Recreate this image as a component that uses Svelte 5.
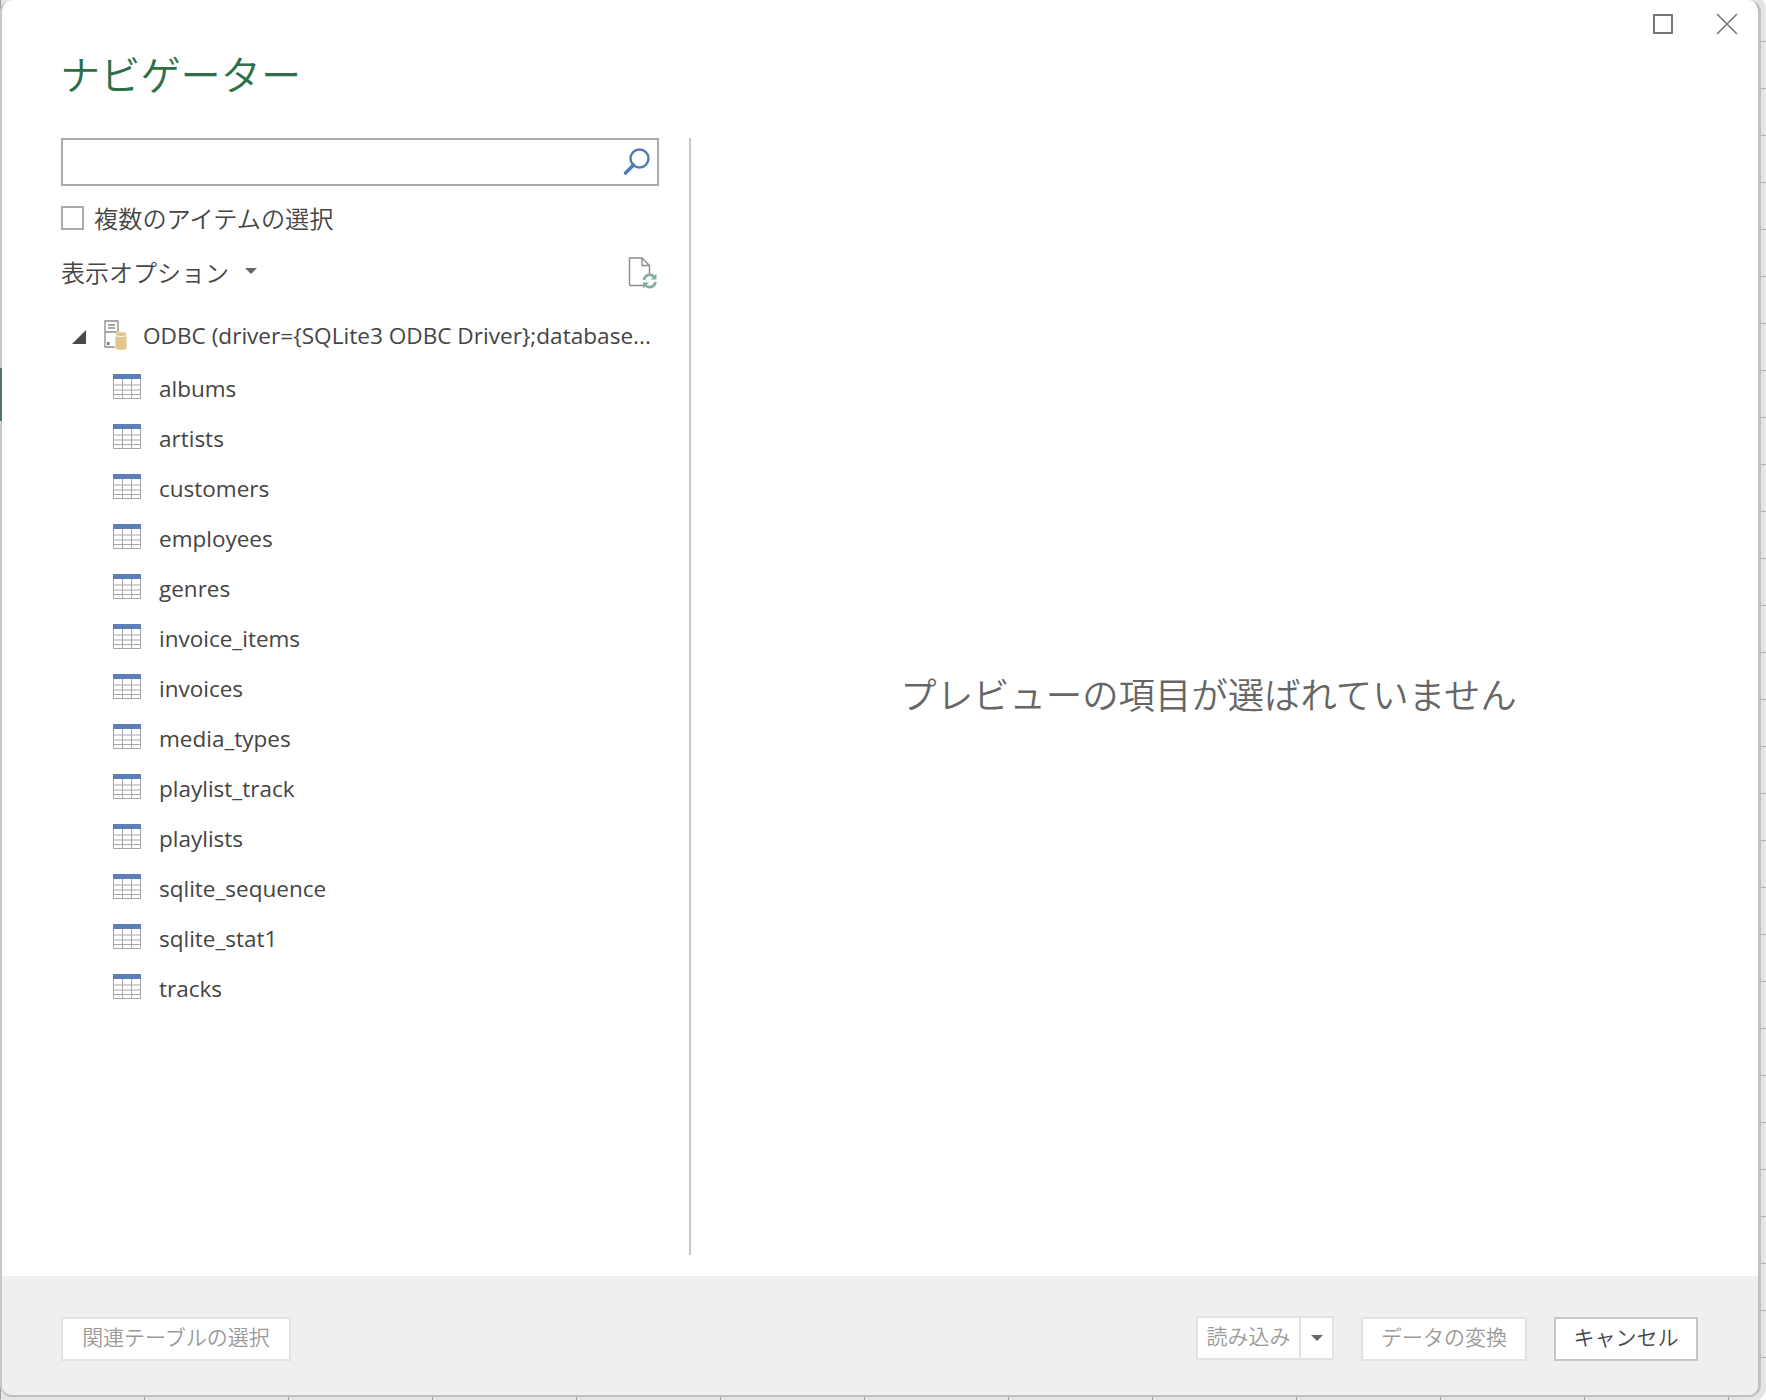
<script>
  const tables = [
    'albums', 'artists', 'customers', 'employees', 'genres', 'invoice_items', 'invoices',
    'media_types', 'playlist_track', 'playlists', 'sqlite_sequence', 'sqlite_stat1', 'tracks'
  ];
</script>

<div class="page">
  <div class="dialog">
    <div class="window-buttons">
      <svg width="20" height="20" viewBox="0 0 20 20"><rect x="1" y="1" width="18" height="18" fill="none" stroke="#777" stroke-width="2" /></svg>
      <svg width="22" height="22" viewBox="0 0 22 22"><path d="M1 1 L21 21 M21 1 L1 21" fill="none" stroke="#777" stroke-width="1.6" /></svg>
    </div>

    <header class="head">
      <h1>ナビゲーター</h1>
    </header>

    <div class="content">
      <div class="left">
        <div class="search">
          <svg class="search-icon" width="30" height="30" viewBox="0 0 30 30">
            <circle cx="17.5" cy="11.5" r="9" fill="none" stroke="#4f7cb8" stroke-width="2.4" />
            <path d="M11.5 18 L3.5 26" fill="none" stroke="#4f7cb8" stroke-width="3.6" stroke-linecap="round" />
          </svg>
        </div>

        <label class="check-row">
          <span class="checkbox"></span>
          <span class="check-label">複数のアイテムの選択</span>
        </label>

        <div class="options-row">
          <span class="options">表示オプション</span>
          <span class="caret"></span>
          <svg class="refresh" width="30" height="32" viewBox="0 0 30 32">
            <path d="M1.5 28.5 V1 H14 L21.5 8.5 V18 M14 1 V8.5 H21.5 M1.500 28.500 H15" fill="none" stroke="#8a8a8a" stroke-width="1.4" />
            <path d="M16 23 A6 6 0 0 1 26.500 20 M27.500 25 A6 6 0 0 1 17 28" fill="none" stroke="#7fae9b" stroke-width="2.6" />
            <path d="M28.500 16.500 V22.500 H22.500 Z M15 31.500 V25.500 H21 Z" fill="#7fae9b" />
          </svg>
        </div>

        <div class="tree-head">
          <svg class="expander" width="14" height="14" viewBox="0 0 14 14"><path d="M14 0 V14 H0 Z" fill="#4a4a4a" /></svg>
          <svg class="server" width="24" height="31" viewBox="0 0 24 31">
            <path d="M1 1 H14 V27 H1 Z M1 12 H14 M4 5 H11 M4 8 H11" fill="none" stroke="#8a8a8a" stroke-width="1.3" />
            <rect x="3" y="22" width="2.500" height="3" fill="#777" />
            <path d="M11 14 C11 11 23 11 23 14 V28 C23 31 11 31 11 28 Z" fill="#e3c48c" stroke="#fff" stroke-width="0.8" />
            <path d="M11 15 C13 17 21 17 23 15" fill="none" stroke="#fff" stroke-width="1" />
          </svg>
          <span class="tree-title">ODBC (driver={'{'}SQLite3 ODBC Driver{'}'};database...</span>
        </div>

        <ul class="tree">
          {#each tables as table}
            <li>
              <svg width="28" height="25" viewBox="0 0 28 25">
                <rect x="0" y="0" width="28" height="5" fill="#5a80b6" />
                <path d="M0.500 5 V24.500 H27.500 V5 M0 11 H28 M0 16 H28 M0 20.500 H28 M9.500 5 V25 M18.500 5 V25" fill="none" stroke="#a6a6a6" stroke-width="1" />
              </svg>
              <span>{table}</span>
            </li>
          {/each}
        </ul>
      </div>

      <div class="divider"></div>

      <div class="preview">プレビューの項目が選ばれていません</div>
    </div>

    <footer class="foot">
      <button class="btn select-related" disabled>関連テーブルの選択</button>
      <div class="load">
        <span class="load-main">読み込み</span>
        <span class="load-arrow"><span class="caret"></span></span>
      </div>
      <button class="btn transform" disabled>データの変換</button>
      <button class="btn cancel">キャンセル</button>
    </footer>
  </div>
  <span class="sheet-tab"></span>
</div>

<style>
  :global(body) {
    background: #fff;
  }
  .page {
    position: relative;
    width: 1766px;
    height: 1400px;
    overflow: hidden;
    font-family: "Open Sans", "Noto Sans CJK JP", sans-serif;
    background-color: #fff;
    background-image:
      linear-gradient(#c4c4c4 1px, transparent 1px),
      linear-gradient(90deg, #b0b0b0 1px, transparent 1px);
    background-size: 100% 47px, 144px 100%;
    background-position: 0 41px, 0 0;
  }
  .dialog {
    position: relative;
    box-sizing: border-box;
    width: 1761px;
    height: 1397px;
    display: flex;
    flex-direction: column;
    background: #fff;
    border-left: 2px solid #c8c8c8;
    border-right: 3px solid #c0c0c0;
    border-bottom: 2px solid #c0c0c0;
    border-radius: 12px;
    box-shadow: 0 0 0 6px rgba(0, 0, 0, 0.1);
    overflow: hidden;
  }
  .sheet-tab {
    position: absolute;
    left: 0;
    top: 368px;
    width: 2px;
    height: 53px;
    background: #4d7a5f;
  }
  .window-buttons {
    position: absolute;
    top: 13px;
    right: 20px;
    display: flex;
    align-items: center;
    gap: 43px;
  }
  .head {
    height: 138px;
    box-sizing: border-box;
    padding: 48px 0 0 58px;
  }
  h1 {
    margin: 0;
    font-size: 40.2px;
    line-height: 54px;
    font-weight: 350;
    color: #2d7048;
  }
  .content {
    display: flex;
    flex: 1;
    min-height: 0;
  }
  .left {
    box-sizing: border-box;
    width: 687px;
    padding: 0 30px 0 59px;
    color: #444;
  }
  .search {
    box-sizing: border-box;
    height: 48px;
    border: 2px solid #ababab;
    display: flex;
    align-items: center;
    justify-content: flex-end;
    padding-right: 5px;
  }
  .check-row {
    display: flex;
    align-items: center;
    gap: 10px;
    height: 34px;
    margin-top: 15px;
    font-size: 24.2px;
    font-weight: 350;
  }
  .check-label {
    padding-bottom: 2px;
  }
  .checkbox {
    box-sizing: border-box;
    width: 23px;
    height: 24px;
    border: 2px solid #ababab;
  }
  .options-row {
    display: flex;
    align-items: center;
    height: 36px;
    margin-top: 18px;
    font-size: 24px;
    font-weight: 350;
  }
  .options {
    margin-right: 16px;
  }
  .caret {
    width: 0;
    height: 0;
    border-left: 6px solid transparent;
    border-right: 6px solid transparent;
    border-top: 6px solid #666;
  }
  .refresh {
    margin: 3px 1px 0 auto;
  }
  .tree-head {
    display: flex;
    align-items: center;
    height: 50px;
    margin-top: 21px;
    padding-left: 11px;
    font-size: 22.6px;
  }
  .tree-head svg {
    flex-shrink: 0;
  }
  .expander {
    margin-top: 4px;
  }
  .server {
    margin-left: 18px;
    margin-right: 15px;
  }
  .tree-title {
    padding-top: 1px;
    white-space: nowrap;
  }
  .tree {
    list-style: none;
    margin: 3.5px 0 0;
    padding: 0 0 0 52px;
  }
  .tree li {
    display: flex;
    align-items: center;
    gap: 18px;
    height: 50px;
    font-size: 22.5px;
  }
  .tree svg {
    flex-shrink: 0;
    margin-bottom: 5px;
  }
  .divider {
    width: 2px;
    height: 1117px;
    background: #c8c8c8;
  }
  .preview {
    flex: 1;
    box-sizing: border-box;
    height: 1117px;
    padding: 0 32px 6px 0;
    display: flex;
    align-items: center;
    justify-content: center;
    font-size: 36.4px;
    font-weight: 350;
    color: #666;
  }
  .foot {
    height: 119px;
    box-sizing: border-box;
    flex-shrink: 0;
    background: #efefef;
    display: flex;
    align-items: flex-start;
    padding: 41px 60px 0 59px;
  }
  .btn {
    box-sizing: border-box;
    height: 44px;
    padding: 0 0 6px;
    font-family: inherit;
    font-size: 21px;
    font-weight: 350;
    background: #fff;
    border: 2px solid #e2e2e2;
    color: #9a9a9a;
  }
  .select-related {
    width: 230px;
    margin-right: auto;
  }
  .load {
    box-sizing: border-box;
    display: flex;
    width: 138px;
    height: 44px;
    margin-top: -1px;
    background: #fff;
    border: 2px solid #e2e2e2;
    font-size: 21px;
    font-weight: 350;
    color: #9a9a9a;
  }
  .load-main {
    box-sizing: border-box;
    width: 103px;
    padding-bottom: 6px;
    display: flex;
    align-items: center;
    justify-content: center;
    border-right: 2px solid #e2e2e2;
  }
  .load-arrow {
    flex: 1;
    display: flex;
    align-items: center;
    justify-content: center;
  }
  .transform {
    width: 166px;
    margin-left: 27px;
  }
  .cancel {
    width: 144px;
    margin-left: 27px;
    border-color: #c6c6c6;
    color: #444;
  }
</style>
